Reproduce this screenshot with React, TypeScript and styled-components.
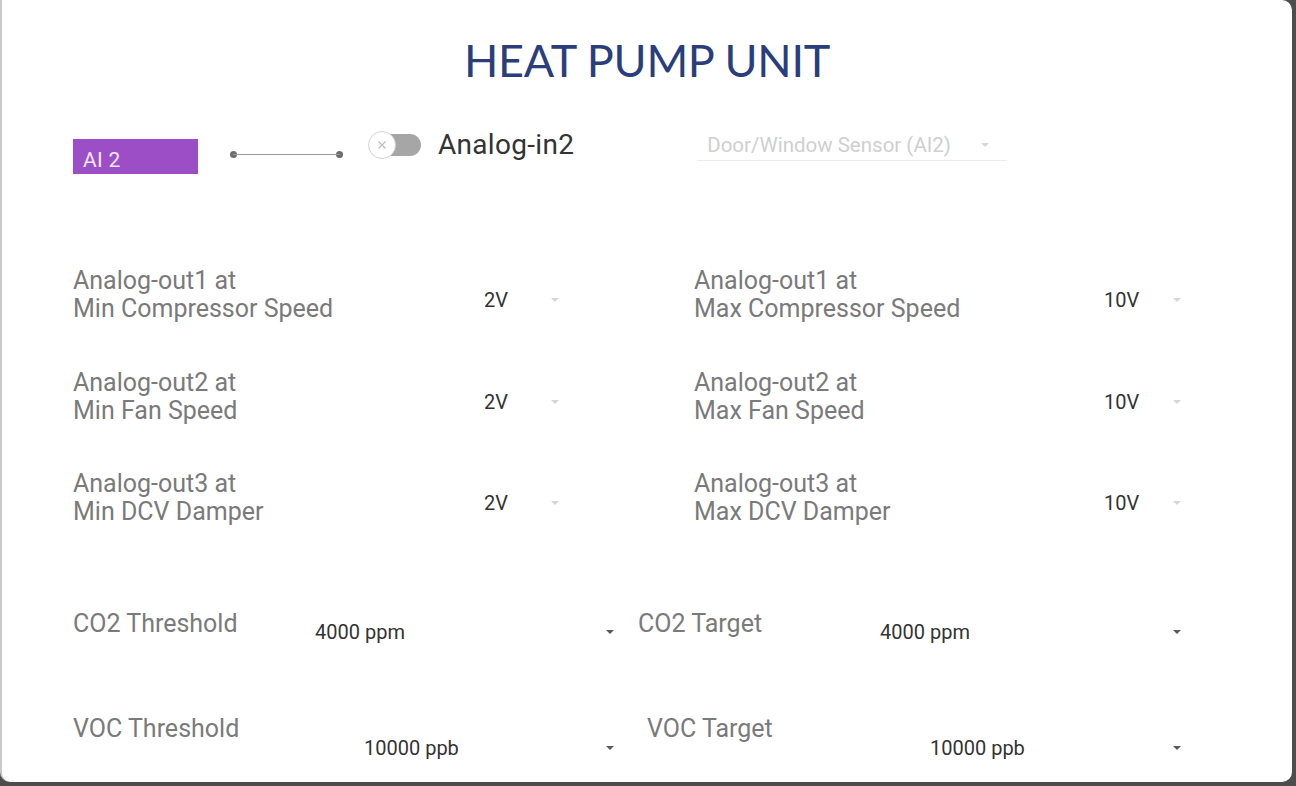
import React from "react";
import styled, { createGlobalStyle } from "styled-components";

const GlobalStyle = createGlobalStyle`
  html, body {
    margin: 0;
    padding: 0;
    background: #4d4d4d;
    width: 1296px;
    height: 786px;
    overflow: hidden;
  }
  * { box-sizing: border-box; }
`;

const Card = styled.div`
  width: 1292px;
  height: 782px;
  background: #fff;
  border-left: 2px solid #c9c9c9;
  border-radius: 0 10px 10px 10px;
  font-family: Roboto, "Liberation Sans", sans-serif;
  padding: 0 0 0 71px;
  display: flex;
  flex-direction: column;
`;

const Title = styled.h1`
  margin: 35px 0 0 -71px;
  font-family: Lato, "Open Sans", sans-serif;
  font-weight: 400;
  font-size: 45px;
  line-height: 50px;
  color: #2b3e7c;
  text-align: center;
  letter-spacing: -0.3px;
`;

const InputRow = styled.div`
  display: flex;
  align-items: center;
  margin-top: 40px;
  height: 40px;
`;

const Tag = styled.div`
  width: 125px;
  height: 35px;
  margin-top: 23px;
  background: #9c4ec7;
  color: #f3e6fa;
  font-size: 21px;
  line-height: 21px;
  padding: 11px 0 0 10px;
  letter-spacing: 0.3px;
`;

const Connector = styled.div`
  position: relative;
  width: 113px;
  height: 7px;
  margin: 18px 0 0 32px;
  display: flex;
  align-items: center;
  justify-content: space-between;

  &::before {
    content: "";
    position: absolute;
    left: 3px;
    right: 3px;
    top: 3px;
    height: 1px;
    background: #9a9a9a;
  }
`;

const Dot = styled.span`
  width: 7px;
  height: 7px;
  border-radius: 50%;
  background: #6d6d6d;
`;

const Switch = styled.div`
  position: relative;
  width: 53px;
  height: 28px;
  margin-left: 25px;
  display: flex;
  align-items: center;
`;

const Track = styled.div`
  margin-left: 10px;
  width: 43px;
  height: 22px;
  border-radius: 11px;
  background: #a6a6a6;
`;

const Knob = styled.div`
  position: absolute;
  left: 0;
  top: 0;
  width: 28px;
  height: 28px;
  border-radius: 50%;
  background: #fff;
  border: 1.5px solid #d4d4d4;
  display: flex;
  align-items: center;
  justify-content: center;
`;

const InputName = styled.span`
  margin-left: 17px;
  font-size: 28px;
  line-height: 32px;
  color: #333;
  letter-spacing: 0.3px;
`;

const SensorSelect = styled.div`
  margin-left: 123px;
  width: 310px;
  height: 31px;
  border-bottom: 1px solid #ececec;
  display: flex;
  align-items: center;
  justify-content: space-between;
  padding: 0 18px 0 10px;
  color: #cfcfcf;
  font-size: 20.5px;
`;

const Caret = styled.span<{ $tone: "light" | "dark" }>`
  width: 0;
  height: 0;
  border-left: 4px solid transparent;
  border-right: 4px solid transparent;
  border-top: 4px solid ${(p) => (p.$tone === "dark" ? "#5a5a5a" : "#d6d6d6")};
`;

const VoltGrid = styled.div`
  margin-top: 101px;
  display: grid;
  grid-template-columns: 621px 560px;
  row-gap: 43.5px;
`;

const VoltField = styled.div`
  display: flex;
  align-items: center;
  height: 58px;
`;

const Label = styled.div<{ $width: number }>`
  width: ${(p) => p.$width}px;
  flex-shrink: 0;
  font-size: 25px;
  line-height: 28px;
  color: #7a7a7a;
  white-space: nowrap;
`;

const VoltValue = styled.div<{ $width: number }>`
  width: ${(p) => p.$width}px;
  display: flex;
  align-items: center;
  justify-content: space-between;
  padding-top: 10px;
  font-size: 20px;
  color: #333;
`;

const AirRow = styled.div<{ $top: number }>`
  display: flex;
  margin-top: ${(p) => p.$top}px;
`;

const AirField = styled.div<{ $width: number }>`
  width: ${(p) => p.$width}px;
  display: flex;
  align-items: flex-start;
`;

const AirSelect = styled.div<{ $width: number; $drop: number }>`
  width: ${(p) => p.$width}px;
  display: flex;
  align-items: center;
  justify-content: space-between;
  margin-top: ${(p) => p.$drop}px;
  font-size: 20px;
  line-height: 28px;
  color: #333;
`;

const volts = [
  ["Analog-out1 at", "Compressor Speed"],
  ["Analog-out2 at", "Fan Speed"],
  ["Analog-out3 at", "DCV Damper"],
];

const CloseMark = () => (
  <svg width="14" height="14" viewBox="0 0 14 14">
    <path d="M3.5 3.5 L10.5 10.5 M10.5 3.5 L3.5 10.5" stroke="#bdbdbd" strokeWidth="1.2" fill="none" />
  </svg>
);

export default function App() {
  return (
    <>
      <GlobalStyle />
      <Card>
        <Title>HEAT PUMP UNIT</Title>

        <InputRow>
          <Tag>AI 2</Tag>
          <Connector>
            <Dot />
            <Dot />
          </Connector>
          <Switch>
            <Track />
            <Knob>
              <CloseMark />
            </Knob>
          </Switch>
          <InputName>Analog-in2</InputName>
          <SensorSelect>
            <span>Door/Window Sensor (AI2)</span>
            <Caret $tone="light" />
          </SensorSelect>
        </InputRow>

        <VoltGrid>
          {volts.map(([first, rest]) => (
            <React.Fragment key={rest}>
              <VoltField>
                <Label $width={411}>
                  {first}
                  <br />
                  Min {rest}
                </Label>
                <VoltValue $width={75}>
                  <span>2V</span>
                  <Caret $tone="light" />
                </VoltValue>
              </VoltField>
              <VoltField>
                <Label $width={410}>
                  {first}
                  <br />
                  Max {rest}
                </Label>
                <VoltValue $width={77}>
                  <span>10V</span>
                  <Caret $tone="light" />
                </VoltValue>
              </VoltField>
            </React.Fragment>
          ))}
        </VoltGrid>

        <AirRow $top={83}>
          <AirField $width={565}>
            <Label $width={242}>CO2 Threshold</Label>
            <AirSelect $width={299} $drop={8}>
              <span>4000 ppm</span>
              <Caret $tone="dark" />
            </AirSelect>
          </AirField>
          <AirField $width={560}>
            <Label $width={242}>CO2 Target</Label>
            <AirSelect $width={301} $drop={8}>
              <span>4000 ppm</span>
              <Caret $tone="dark" />
            </AirSelect>
          </AirField>
        </AirRow>

        <AirRow $top={69}>
          <AirField $width={574}>
            <Label $width={291}>VOC Threshold</Label>
            <AirSelect $width={250} $drop={19}>
              <span>10000 ppb</span>
              <Caret $tone="dark" />
            </AirSelect>
          </AirField>
          <AirField $width={560}>
            <Label $width={283}>VOC Target</Label>
            <AirSelect $width={251} $drop={19}>
              <span>10000 ppb</span>
              <Caret $tone="dark" />
            </AirSelect>
          </AirField>
        </AirRow>
      </Card>
    </>
  );
}
